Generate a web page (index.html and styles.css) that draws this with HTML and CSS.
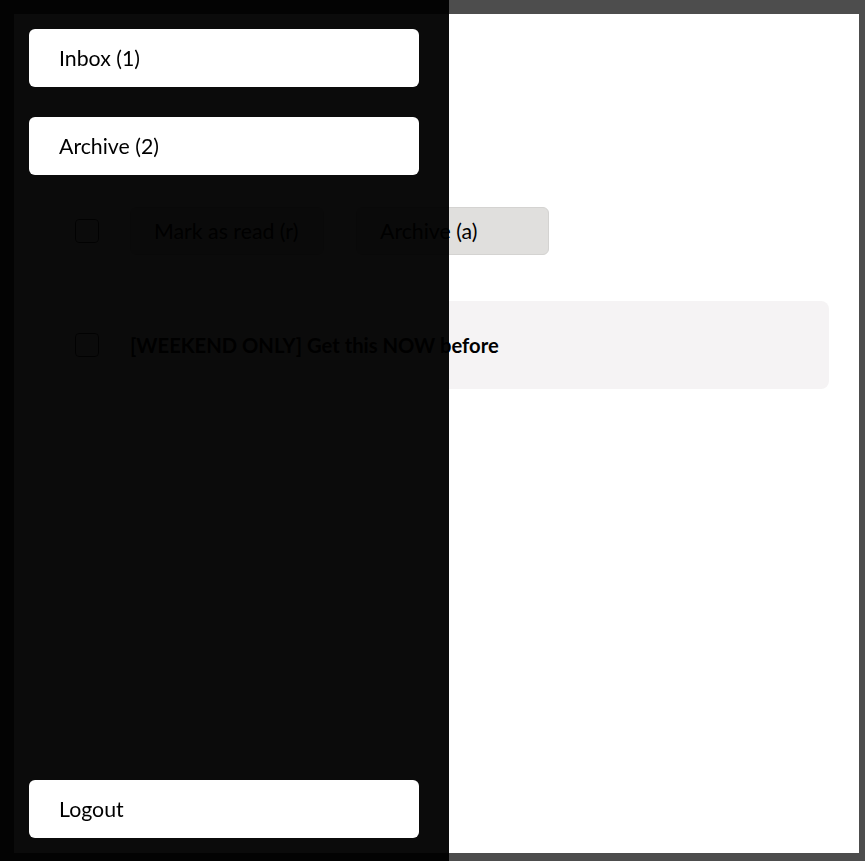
FILE: index.html
```html
<!DOCTYPE html>
<html lang="en">
<head>
<meta charset="utf-8">
<title>Mail</title>
<link rel="stylesheet" href="styles.css">
</head>
<body>
<div class="page">
  <main class="mail">
    <div class="toolbar">
      <span class="check"></span>
      <button class="tool-btn">Mark as read (r)</button>
      <button class="tool-btn">Archive (a)</button>
    </div>
    <div class="message">
      <span class="check"></span>
      <span class="subject">[WEEKEND ONLY] Get this NOW before</span>
    </div>
  </main>
</div>
<aside class="drawer">
  <nav class="drawer-nav">
    <button class="nav-btn">Inbox (1)</button>
    <button class="nav-btn">Archive (2)</button>
  </nav>
  <button class="nav-btn logout">Logout</button>
</aside>
</body>
</html>
```
FILE: styles.css
```css
* { box-sizing: border-box; }
html, body { height: 100%; }
body {
  margin: 0;
  padding: 14px 6px 8px 14px;
  background: #4d4d4d;
  font-family: Lato, "Open Sans", sans-serif;
  color: #000;
}
.page {
  background: #fff;
  height: 100%;
}
.mail {
  padding: 193px 30px 0 30px;
}
.toolbar {
  display: flex;
  align-items: center;
  padding-left: 31px;
}
.check {
  width: 24px;
  height: 24px;
  border: 1.5px solid #3b3b3b;
  border-radius: 4px;
  flex: none;
}
.tool-btn {
  font: inherit;
  font-size: 21.3px;
  color: #000;
  width: 194px;
  height: 48px;
  background: #e0dfdd;
  border: 1px solid #d4d3d1;
  border-radius: 6px;
  padding: 0 0 0 23px;
  text-align: left;
  margin-left: 31px;
}
.toolbar .tool-btn + .tool-btn { margin-left: 32px; width: 193px; }
.message {
  margin-top: 46px;
  height: 88px;
  background: #f5f3f4;
  border-radius: 8px;
  display: flex;
  align-items: center;
  padding-left: 31px;
}
.subject {
  margin-left: 31px;
  font-weight: 700;
  font-size: 20.2px;
}
.drawer {
  position: fixed;
  left: 0;
  top: 0;
  bottom: 0;
  width: 449px;
  background: rgba(0, 0, 0, 0.957);
  padding: 29px 30px 23px 29px;
  display: flex;
  flex-direction: column;
}
.drawer-nav {
  display: flex;
  flex-direction: column;
  gap: 30px;
}
.nav-btn {
  font: inherit;
  font-size: 21.3px;
  color: #000;
  background: #fff;
  border: none;
  border-radius: 6px;
  height: 58px;
  text-align: left;
  padding: 0 30px;
}
.logout { margin-top: auto; }
```
